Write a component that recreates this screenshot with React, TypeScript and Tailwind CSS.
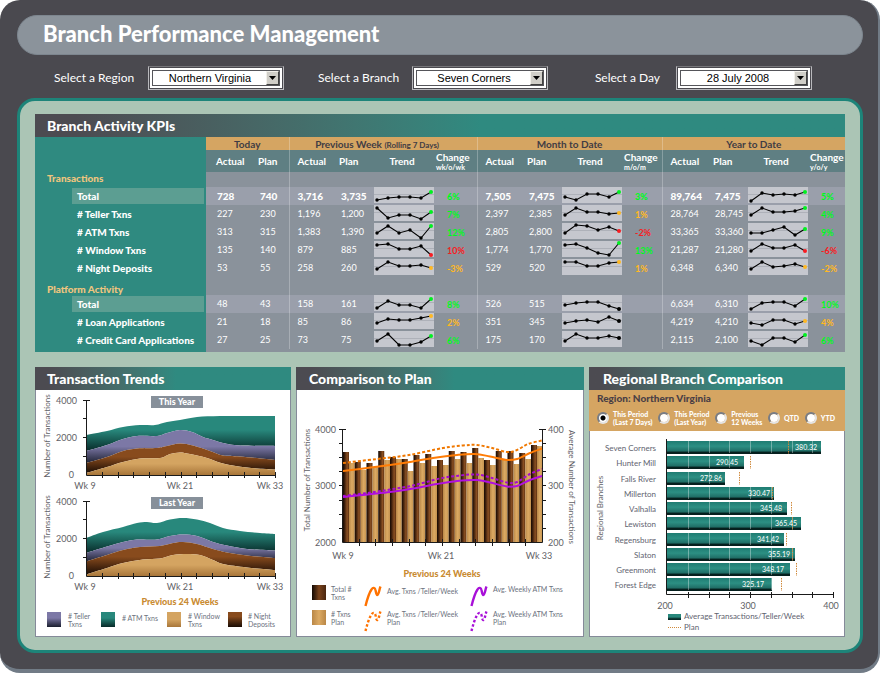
import { useId, useState } from "react";
import type { ReactNode } from "react";

type Point = [number, number];
type Tone = "good" | "warn" | "bad" | "none";

interface Period {
  actual: string;
  plan: string;
  trend?: number[];
  tone?: Tone;
  change?: string;
}

interface KpiRow {
  label: string;
  total?: boolean;
  strong?: boolean;
  periods: Period[];
}

const toneFill: Record<Tone, string> = {
  good: "#00f020",
  warn: "#ffb822",
  bad: "#f81c22",
  none: "#000000",
};

const toneText: Record<Tone, string> = {
  good: "text-[#00fa1e]",
  warn: "text-[#ffb822]",
  bad: "text-[#f81c22]",
  none: "text-white",
};

const transactions: KpiRow[] = [
  {
    label: "Total",
    total: true,
    strong: true,
    periods: [
      { actual: "728", plan: "740" },
      { actual: "3,716", plan: "3,735", trend: [13, 11, 10, 10, 11, 5], tone: "good", change: "6%" },
      { actual: "7,505", plan: "7,475", trend: [10, 13, 7, 7, 10, 5], tone: "good", change: "3%" },
      { actual: "89,764", plan: "7,475", trend: [14, 6, 8, 7, 8, 5], tone: "good", change: "5%" },
    ],
  },
  {
    label: "# Teller Txns",
    periods: [
      { actual: "227", plan: "230" },
      { actual: "1,196", plan: "1,200", trend: [3, 13, 10, 10, 14, 7], tone: "good", change: "7%" },
      { actual: "2,397", plan: "2,385", trend: [10, 3, 7, 7, 9, 8], tone: "warn", change: "1%" },
      { actual: "28,764", plan: "28,745", trend: [10, 3, 7, 7, 6, 3], tone: "good", change: "4%" },
    ],
  },
  {
    label: "# ATM Txns",
    periods: [
      { actual: "313", plan: "315" },
      { actual: "1,383", plan: "1,390", trend: [10, 3, 10, 7, 15, 3], tone: "good", change: "12%" },
      { actual: "2,805", plan: "2,800", trend: [10, 2, 3, 7, 4, 8], tone: "bad", change: "-2%" },
      { actual: "33,365", plan: "33,360", trend: [10, 10, 7, 4, 12, 6], tone: "good", change: "9%" },
    ],
  },
  {
    label: "# Window Txns",
    periods: [
      { actual: "135", plan: "140" },
      { actual: "879", plan: "885", trend: [4, 3, 8, 8, 5, 14], tone: "bad", change: "10%" },
      { actual: "1,774", plan: "1,770", trend: [4, 3, 7, 12, 14, 2], tone: "good", change: "13%" },
      { actual: "21,287", plan: "21,280", trend: [10, 3, 7, 7, 4, 10], tone: "bad", change: "-6%" },
    ],
  },
  {
    label: "# Night Deposits",
    periods: [
      { actual: "53", plan: "55" },
      { actual: "258", plan: "260", trend: [10, 3, 7, 7, 6, 9], tone: "warn", change: "-3%" },
      { actual: "529", plan: "520", trend: [3, 3, 7, 7, 4, 3], tone: "warn", change: "1%" },
      { actual: "6,348", plan: "6,340", trend: [10, 3, 8, 7, 5, 8], tone: "warn", change: "-2%" },
    ],
  },
];

const platform: KpiRow[] = [
  {
    label: "Total",
    total: true,
    periods: [
      { actual: "48", plan: "43" },
      { actual: "158", plan: "161", trend: [13, 6, 10, 10, 13, 4], tone: "good", change: "8%" },
      { actual: "526", plan: "515", trend: [10, 8, 7, 7, 11, 14], tone: "none" },
      { actual: "6,634", plan: "6,310", trend: [14, 8, 7, 7, 11, 4], tone: "good", change: "10%" },
    ],
  },
  {
    label: "# Loan Applications",
    periods: [
      { actual: "21", plan: "18" },
      { actual: "85", plan: "86", trend: [10, 6, 7, 7, 5, 3], tone: "warn", change: "2%" },
      { actual: "351", plan: "345", trend: [10, 8, 7, 9, 4, 8], tone: "none" },
      { actual: "4,219", plan: "4,210", trend: [10, 12, 7, 7, 11, 8], tone: "warn", change: "4%" },
    ],
  },
  {
    label: "# Credit Card Applications",
    periods: [
      { actual: "27", plan: "25" },
      { actual: "73", plan: "75", trend: [10, 3, 14, 14, 11, 5], tone: "good", change: "6%" },
      { actual: "175", plan: "170", trend: [10, 3, 7, 7, 5, 7], tone: "none" },
      { actual: "2,115", plan: "2,100", trend: [10, 14, 7, 7, 11, 4], tone: "good", change: "6%" },
    ],
  },
];

/* Smooth curve through the points (Catmull-Rom turned into cubic segments). */
function curve(points: Point[]): string {
  let d = "";
  for (let i = 0; i < points.length - 1; i++) {
    const p0 = points[Math.max(0, i - 1)];
    const p1 = points[i];
    const p2 = points[i + 1];
    const p3 = points[Math.min(points.length - 1, i + 2)];
    d += ` C${p1[0] + (p2[0] - p0[0]) / 6},${p1[1] + (p2[1] - p0[1]) / 6} ${p2[0] - (p3[0] - p1[0]) / 6},${p2[1] - (p3[1] - p1[1]) / 6} ${p2[0]},${p2[1]}`;
  }
  return d;
}

function line(points: Point[]): string {
  return `M${points[0][0]},${points[0][1]}${curve(points)}`;
}

function band(top: Point[], bottom: Point[]): string {
  const back = [...bottom].reverse();
  return `${line(top)} L${back[0][0]},${back[0][1]}${curve(back)} Z`;
}

/* ---------- Top bar ---------- */

function Picker({ label, options }: { label: string; options: string[] }) {
  const id = useId();
  return (
    <div className="flex items-center gap-4">
      <label htmlFor={id} className="w-[78px] whitespace-nowrap text-right text-[12px] leading-4 text-white">
        {label}
      </label>
      <div className="border border-[#b9b9bd] border-t-[#77777b] p-px">
        <div className="relative border-2 border-white">
          <select
            id={id}
            className="block h-4 w-[128px] appearance-none border border-[#55555a] bg-white pr-3 text-center font-['Liberation_Sans',Arial,sans-serif] text-[11px] leading-[14px] text-black outline-none"
          >
            {options.map((o) => (
              <option key={o}>{o}</option>
            ))}
          </select>
          <span className="pointer-events-none absolute inset-y-px right-px flex w-[13px] items-center justify-center border border-[#f2f0ea] border-r-[#404040] border-b-[#404040] bg-[#d0cec8]">
            <svg width="7" height="4" viewBox="0 0 7 4" aria-hidden="true">
              <path d="M0 0h7L3.5 4z" fill="#000" />
            </svg>
          </span>
        </div>
      </div>
    </div>
  );
}

/* ---------- KPI table ---------- */

function Sparkline({ values, tone }: { values: number[]; tone: Tone }) {
  const xs = [3, 14, 25, 36, 47, 57];
  return (
    <svg viewBox="0 0 60 18" className="block h-[18px] w-full" aria-hidden="true">
      <rect width="60" height="16" fill="#c5c7ce" />
      <path d="M0 7.5h60" stroke="#aeb1b9" />
      <polyline points={values.map((v, i) => `${xs[i]},${v}`).join(" ")} fill="none" stroke="#000" strokeWidth="1.1" />
      {values.map((v, i) => (
        <circle key={i} cx={xs[i]} cy={v} r={i === 5 ? 2 : 1.7} fill={i === 5 ? toneFill[tone] : "#000"} />
      ))}
    </svg>
  );
}

function PeriodCells({ period, first, strong }: { period: Period; first: boolean; strong?: boolean }) {
  const text = strong ? "text-[10px] font-black" : "text-[9px] font-normal";
  return (
    <>
      <td className={`${first ? "pl-[11px]" : "border-l border-white/25 pl-2"} ${text}`}>{period.actual}</td>
      <td className={`pl-[9px] ${text}`}>{period.plan}</td>
      {!first && (
        <>
          <td>{period.trend && <Sparkline values={period.trend} tone={period.tone ?? "none"} />}</td>
          <td className={`pt-0.5 pl-[13px] text-[9px] ${strong ? "font-black" : "font-bold"} ${toneText[period.tone ?? "none"]}`}>
            {period.change}
          </td>
        </>
      )}
    </>
  );
}

function SectionRow({ title, tall }: { title: string; tall?: boolean }) {
  return (
    <tr className={tall ? "h-[18px]" : "h-[15px]"}>
      <th
        scope="rowgroup"
        className={`bg-[#2f8a80] pl-3 text-left text-[10px] leading-3 font-black text-[#efc57e] ${tall ? "align-bottom" : "align-top"}`}
      >
        {title}
      </th>
      <td colSpan={2} />
      <td colSpan={4} className="border-l border-white/25" />
      <td colSpan={4} className="border-l border-white/25" />
      <td colSpan={4} className="border-l border-white/25" />
    </tr>
  );
}

function KpiRows({ rows }: { rows: KpiRow[] }) {
  return (
    <>
      {rows.map((row) => (
        <tr key={row.label} className={`h-[18px] leading-4 ${row.total ? "bg-[#9a9fab]" : ""}`}>
          <th scope="row" className="bg-[#2f8a80] pr-0.5 pl-[37px] text-left text-[10px] font-black whitespace-nowrap">
            <div className={`pl-[5px] ${row.total ? "bg-[#5c9e92]" : ""}`}>{row.label}</div>
          </th>
          {row.periods.map((p, i) => (
            <PeriodCells key={i} period={p} first={i === 0} strong={row.strong} />
          ))}
        </tr>
      ))}
    </>
  );
}

function HeadCells({ unit }: { unit?: string }) {
  return (
    <>
      <th scope="col" className={`text-left ${unit ? "border-l border-white/25 pl-2" : "pl-2.5"}`}>
        Actual
      </th>
      <th scope="col" className="pl-[7px] text-left">
        Plan
      </th>
      {unit && (
        <>
          <th scope="col" className="pr-1 text-center">Trend</th>
          <th scope="col" className="pl-0.5 text-left leading-3">
            <span className="block">Change</span>
            <span className="block text-[7px] leading-[9px]">{unit}</span>
          </th>
        </>
      )}
    </>
  );
}

function KpiTable() {
  return (
    <table className="w-full table-fixed border-collapse bg-[#8a929b] text-white">
      <colgroup>
        <col className="w-[171px]" />
        <col className="w-[45px]" />
        <col className="w-[38px]" />
        <col className="w-[43px]" />
        <col className="w-[42px]" />
        <col className="w-[60px]" />
        <col className="w-[43px]" />
        <col className="w-[43px]" />
        <col className="w-[42px]" />
        <col className="w-[60px]" />
        <col className="w-[40px]" />
        <col className="w-[44px]" />
        <col className="w-[42px]" />
        <col className="w-[60px]" />
        <col className="w-[37px]" />
      </colgroup>
      <thead>
        <tr className="h-[13px] bg-[#d5a562] text-[10px] leading-3 font-black text-[#413c44]">
          <td rowSpan={2} className="bg-[#2f8a80]" />
          <th scope="colgroup" colSpan={2}>Today</th>
          <th scope="colgroup" colSpan={4} className="border-l border-white/25 pr-3">
            Previous Week <span className="text-[8px] leading-none">(Rolling 7 Days)</span>
          </th>
          <th scope="colgroup" colSpan={4} className="border-l border-white/25">Month to Date</th>
          <th scope="colgroup" colSpan={4} className="border-l border-white/25">Year to Date</th>
        </tr>
        <tr className="h-[22px] bg-[#5f7f83] text-[10px] leading-3 font-black">
          <HeadCells />
          <HeadCells unit="wk/o/wk" />
          <HeadCells unit="m/o/m" />
          <HeadCells unit="y/o/y" />
        </tr>
      </thead>
      <tbody>
        <SectionRow title="Transactions" />
        <KpiRows rows={transactions} />
      </tbody>
      <tbody>
        <SectionRow title="Platform Activity" tall />
        <KpiRows rows={platform} />
      </tbody>
    </table>
  );
}

/* ---------- Panels ---------- */

function TitleBar({ children, inset = "pl-3" }: { children: ReactNode; inset?: string }) {
  return (
    <h2
      className={`h-[23px] bg-linear-to-r from-[#4c4b51] from-5% to-[#2f8a80] to-55% text-[14px] leading-[23px] font-black whitespace-nowrap text-white ${inset}`}
    >
      {children}
    </h2>
  );
}

function Panel({ title, inset, children }: { title: string; inset?: string; children: ReactNode }) {
  return (
    <section className="flex flex-col">
      <TitleBar inset={inset}>{title}</TitleBar>
      <div className="flex flex-1 flex-col border border-t-0 border-[#858a99] bg-white">{children}</div>
    </section>
  );
}

function Gradients({ id }: { id: string }) {
  return (
    <defs>
      <linearGradient id={`${id}-atm`} x1="0" y1="0" x2="0" y2="1">
        <stop offset="0.4" stopColor="#28887c" />
        <stop offset="1" stopColor="#082b29" />
      </linearGradient>
      <linearGradient id={`${id}-teller`} x1="0" y1="0" x2="0" y2="1">
        <stop offset="0.5" stopColor="#7c78a6" />
        <stop offset="1" stopColor="#1f2334" />
      </linearGradient>
      <linearGradient id={`${id}-night`} x1="0" y1="0" x2="0" y2="1">
        <stop offset="0.45" stopColor="#884b1d" />
        <stop offset="1" stopColor="#1b0d05" />
      </linearGradient>
      <linearGradient id={`${id}-window`} x1="0" y1="0" x2="0" y2="1">
        <stop offset="0.5" stopColor="#d4a461" />
        <stop offset="1" stopColor="#a8763a" />
      </linearGradient>
    </defs>
  );
}

interface Areas {
  atm: Point[];
  teller: Point[];
  night: Point[];
  window: Point[];
}

const thisYear: Areas = {
  atm: [[50, 45], [71, 41], [87, 37], [104, 35], [119, 35], [131, 32], [144, 30], [161, 27], [184, 26], [217, 26], [239, 26]],
  teller: [[50, 61], [71, 55], [87, 49], [101, 46], [121, 46], [131, 43], [144, 40], [156, 42], [167, 47], [177, 50], [187, 53], [204, 55.5], [239, 56]],
  night: [[50, 73], [71, 67], [87, 61], [101, 58.5], [121, 58], [131, 56], [144, 53.5], [157, 55.5], [174, 61], [187, 65.5], [204, 66.5], [239, 70]],
  window: [[50, 83], [71, 77], [87, 72], [104, 68.5], [124, 68], [134, 64], [144, 62.5], [154, 64], [171, 68], [187, 73.5], [211, 77.5], [239, 79.5]],
};

const lastYear: Areas = {
  atm: [[50, 47], [67, 41], [87, 36], [101, 32], [111, 31], [121, 32], [134, 28.5], [147, 27], [161, 28.5], [174, 32], [187, 37], [204, 40], [224, 42], [239, 43]],
  teller: [[50, 62], [71, 55.5], [87, 51], [101, 48.5], [121, 48.5], [134, 45], [147, 43.5], [161, 45], [177, 51], [191, 54.5], [211, 58], [239, 59.5]],
  night: [[50, 70.5], [71, 64], [87, 59], [104, 56], [124, 55], [137, 52], [147, 51], [161, 53], [177, 58], [191, 61.5], [211, 64.5], [239, 67]],
  window: [[50, 83.5], [71, 77], [87, 72], [107, 68.5], [124, 67.5], [137, 64], [151, 63], [164, 64], [177, 69], [187, 73], [211, 76.5], [239, 79]],
};

function AreaChart({ title, areas }: { title: string; areas: Areas }) {
  const id = useId();
  const base: Point[] = [[50, 85], [239, 85]];
  return (
    <svg viewBox="0 0 254 101" className="block w-full" role="img" aria-label={`Number of transactions, ${title}`}>
      <Gradients id={id} />
      <path d={band(areas.atm, areas.teller)} fill={`url(#${id}-atm)`} />
      <path d={band(areas.teller, areas.night)} fill={`url(#${id}-teller)`} />
      <path d={band(areas.night, areas.window)} fill={`url(#${id}-night)`} />
      <path d={band(areas.window, base)} fill={`url(#${id}-window)`} />
      <g stroke="#1a1a1a" fill="none">
        <path d="M50.5 10.5V85.5H239.5" />
        {[11, 29, 48, 67].map((y) => (
          <path key={y} d={`M47 ${y - 0.5}h${y === 11 ? 7 : 4}`} />
        ))}
        {Array.from({ length: 12 }, (_, i) => (
          <path key={i} d={`M${Math.round(50 + (i + 1) * 15.75) + 0.5} 82v6`} />
        ))}
      </g>
      <rect x="115" y="6" width="52" height="12" fill="#87909a" />
      <g fontSize="9" fill="#5f6166">
        <text x="141" y="15" textAnchor="middle" fontWeight="900" fill="#fff">{title}</text>
        <text x="41" y="14" textAnchor="end">4000</text>
        <text x="41" y="51" textAnchor="end">2000</text>
        <text x="38" y="88" textAnchor="end">0</text>
        <text x="49" y="99" textAnchor="middle">Wk 9</text>
        <text x="144" y="99" textAnchor="middle">Wk 21</text>
        <text x="234" y="99" textAnchor="middle">Wk 33</text>
        <text transform="translate(14 46) rotate(-90)" textAnchor="middle" fontSize="8">Number of Transactions</text>
      </g>
    </svg>
  );
}

function Swatch({ className }: { className: string }) {
  return <span className={`h-[15px] w-[14px] shrink-0 ${className}`} />;
}

function Caption({ children }: { children: ReactNode }) {
  return <p className="text-center text-[9px] leading-3 font-black text-[#c98b31]">{children}</p>;
}

function TransactionTrends() {
  return (
    <Panel title="Transaction Trends">
      <AreaChart title="This Year" areas={thisYear} />
      <AreaChart title="Last Year" areas={lastYear} />
      <div className="pt-1 pl-[34px]">
        <Caption>Previous 24 Weeks</Caption>
      </div>
      <ul className="grid grid-cols-[54fr_66fr_61fr_62fr] pt-1 pb-2 pl-[11px] text-[7px] leading-2 whitespace-nowrap text-[#6c7280]">
        <li className="flex gap-[7px]">
          <Swatch className="bg-linear-to-b from-[#7c78a6] from-40% to-[#1c2030]" />
          <span># Teller<br />Txns</span>
        </li>
        <li className="flex gap-[7px]">
          <Swatch className="bg-linear-to-b from-[#28887c] from-40% to-[#082b29]" />
          <span className="pt-0.5"># ATM Txns</span>
        </li>
        <li className="flex gap-[7px]">
          <Swatch className="bg-linear-to-b from-[#d4a461] from-50% to-[#a8763a]" />
          <span># Window<br />Txns</span>
        </li>
        <li className="flex gap-1.5">
          <Swatch className="bg-linear-to-b from-[#884b1d] from-30% to-[#1b0d05]" />
          <span># Night<br />Deposits</span>
        </li>
      </ul>
    </Panel>
  );
}

const actualTops = [62, 72, 73, 61, 67, 69, 65, 64, 70, 61, 62, 58, 70, 61, 61, 63, 55];
const planTops = [73, 80, 77, 70, 69, 81, 73, 76, 75, 69, 73, 68, 75, 69, 74, 69, 56];

const tellerLine: Point[] = [[46, 81], [70, 78], [93, 75], [113, 72], [136, 68], [160, 65], [178, 64], [193, 66.5], [210, 70], [220, 69], [233, 63], [245, 58.5]];
const tellerPlan: Point[] = [[46, 73], [80, 69], [112, 65], [146, 58], [166, 55.5], [180, 55], [195, 58], [210, 62], [220, 60], [231, 54], [245, 50.5]];
const atmLine: Point[] = [[46, 107], [93, 102], [116, 98.5], [140, 94], [160, 91], [180, 90], [193, 92.5], [210, 96.5], [220, 96], [233, 90], [245, 86]];
const atmPlan: Point[] = [[46, 106], [70, 103], [93, 99.5], [116, 95.5], [143, 88.5], [163, 85.5], [180, 84.5], [195, 88], [210, 92.5], [220, 92], [233, 84], [245, 79]];

function ComparisonChart() {
  const id = useId();
  return (
    <svg viewBox="0 0 286 173" className="block w-full" role="img" aria-label="Comparison of transactions to plan">
      <defs>
        <linearGradient id={`${id}-a`}>
          <stop offset="0" stopColor="#150a04" />
          <stop offset="0.25" stopColor="#3a1d0b" />
          <stop offset="0.7" stopColor="#8a4f22" />
          <stop offset="1" stopColor="#5c3112" />
        </linearGradient>
        <linearGradient id={`${id}-p`}>
          <stop offset="0" stopColor="#b98747" />
          <stop offset="0.5" stopColor="#dcaa63" />
          <stop offset="1" stopColor="#c4924f" />
        </linearGradient>
      </defs>
      {actualTops.map((top, i) => {
        const x = 46 + i * 11.75;
        return (
          <g key={i}>
            <rect x={x} y={top} width="6" height={152 - top} fill={`url(#${id}-a)`} />
            <rect x={x + 6} y={planTops[i]} width="5.75" height={152 - planTops[i]} fill={`url(#${id}-p)`} />
          </g>
        );
      })}
      <g stroke="#1a1a1a" fill="none">
        <path d="M45.5 39.5V152.5H245.5V39.5" />
        {Array.from({ length: 8 }, (_, i) => {
          const y = Math.round(39 + i * 14.1) + 0.5;
          return <path key={i} d={i === 0 ? `M42 ${y}h7M242 ${y}h7` : `M42 ${y}h4M245 ${y}h4`} />;
        })}
        {Array.from({ length: 11 }, (_, i) => (
          <path key={i} d={`M${Math.round(45 + (i + 1) * 16.65) + 0.5} 149v7`} />
        ))}
      </g>
      <g fill="none" strokeWidth="2">
        <path d={line(tellerPlan)} stroke="#f07800" strokeDasharray="3 2" />
        <path d={line(tellerLine)} stroke="#ff7c05" />
        <path d={line(atmPlan)} stroke="#a50cd0" strokeDasharray="3 2" />
        <path d={line(atmLine)} stroke="#b010e0" />
      </g>
      <g fontSize="9" fill="#5f6166">
        <text x="39" y="43" textAnchor="end">4000</text>
        <text x="39" y="99" textAnchor="end">3000</text>
        <text x="39" y="156" textAnchor="end">2000</text>
        <text x="251" y="43">400</text>
        <text x="251" y="99">300</text>
        <text x="251" y="156">200</text>
        <text x="46" y="169" textAnchor="middle">Wk 9</text>
        <text x="144" y="169" textAnchor="middle">Wk 21</text>
        <text x="242" y="169" textAnchor="middle">Wk 33</text>
        <text transform="translate(13 90) rotate(-90)" textAnchor="middle" fontSize="8">Total Number of Transactions</text>
        <text transform="translate(272 97) rotate(90)" textAnchor="middle" fontSize="8">Average Number of Transactions</text>
      </g>
    </svg>
  );
}

function Squiggle({ color, dashed }: { color: string; dashed?: boolean }) {
  return (
    <svg width="18" height="22" viewBox="0 0 18 22" className="shrink-0" aria-hidden="true">
      <path
        d="M1.500 21C3 15 5 8 7.500 4.500 9 2 11 2.500 11.500 5c.5 2 .5 4 1.500 5 2 0 2-5 3.500-8.500"
        fill="none"
        stroke={color}
        strokeWidth="2.400"
        strokeLinejoin="round"
        strokeDasharray={dashed ? "2.500 2" : undefined}
      />
    </svg>
  );
}

function ComparisonToPlan() {
  return (
    <Panel title="Comparison to Plan" inset="pl-[13px]">
      <ComparisonChart />
      <div className="pt-[5px] pl-1">
        <Caption>Previous 24 Weeks</Caption>
      </div>
      <ul className="grid grid-cols-[52fr_106fr_113fr] gap-y-[3px] pt-[5px] pl-[15px] text-[7px] leading-2 whitespace-nowrap text-[#6c7280]">
        <li className="flex gap-[5px]">
          <Swatch className="bg-linear-to-r from-[#150a04] via-[#7a431b] to-[#4a2710]" />
          <span>Total #<br />Txns</span>
        </li>
        <li className="flex gap-[5px]">
          <Squiggle color="#ff7200" />
          <span className="pt-0.5">Avg. Txns /Teller/Week</span>
        </li>
        <li className="flex gap-[5px]">
          <Squiggle color="#a810d8" />
          <span>Avg. Weekly ATM Txns</span>
        </li>
        <li className="flex gap-[5px]">
          <Swatch className="bg-linear-to-r from-[#b98747] via-[#dcaa63] to-[#b98747]" />
          <span># Txns<br />Plan</span>
        </li>
        <li className="flex gap-[5px]">
          <Squiggle color="#ff7200" dashed />
          <span>Avg. Txns /Teller/Week<br />Plan</span>
        </li>
        <li className="flex gap-[5px]">
          <Squiggle color="#a810d8" dashed />
          <span>Avg. Weekly ATM Txns<br />Plan</span>
        </li>
      </ul>
    </Panel>
  );
}

const branches = [
  { name: "Seven Corners", value: "380.32", end: 231, label: 227, plan: 198 },
  { name: "Hunter Mill", value: "290.45", end: 154, label: 148, plan: 160 },
  { name: "Falls River", value: "272.86", end: 135, label: 132, plan: 149 },
  { name: "Millerton", value: "330.47", end: 184, label: 180, plan: 182 },
  { name: "Valhalla", value: "345.48", end: 197, label: 192, plan: 201 },
  { name: "Lewiston", value: "365.45", end: 211, label: 207, plan: 202 },
  { name: "Regensburg", value: "341.42", end: 194, label: 189, plan: 196 },
  { name: "Slaton", value: "355.19", end: 205, label: 200, plan: 202 },
  { name: "Greenmont", value: "348.17", end: 200, label: 194, plan: 206 },
  { name: "Forest Edge", value: "325.17", end: 182, label: 174, plan: 191 },
];

function BranchChart() {
  const id = useId();
  const ticks = Array.from({ length: 8 }, (_, i) => Math.round(77 + (i + 1) * 20.75));
  return (
    <svg viewBox="0 0 254 180" className="block w-full" role="img" aria-label="Average transactions per teller per week by branch">
      <defs>
        <linearGradient id={`${id}-bar`} x1="0" y1="0" x2="0" y2="1">
          <stop offset="0" stopColor="#1f7c72" />
          <stop offset="0.4" stopColor="#2c8f83" />
          <stop offset="0.75" stopColor="#206f67" />
          <stop offset="0.88" stopColor="#06201e" />
          <stop offset="1" stopColor="#06201e" />
        </linearGradient>
      </defs>
      {branches.map((b, i) => {
        const y = Math.round(10 + i * 15.25);
        return (
          <g key={b.name}>
            <rect x="77" y={y} width={b.end - 77} height="13" fill={`url(#${id}-bar)`} />
            {ticks.filter((t) => t < b.end).map((t) => (
              <path key={t} d={`M${t + 0.5} ${y}v12`} stroke="#fff" strokeOpacity="0.35" />
            ))}
            <path d={`M${b.plan + 0.5} ${y}v13`} stroke="#d08a3c" strokeDasharray="1.500 1" />
            <text x="66" y={y + 10} textAnchor="end" fontSize="8" fill="#5f6470">{b.name}</text>
            <text x={b.label} y={y + 9} textAnchor="end" fontSize="7" fill="#fff">{b.value}</text>
          </g>
        );
      })}
      <g stroke="#1a1a1a" fill="none">
        <path d="M76.500 8V163.500H243.500" />
        {ticks.map((t) => (
          <path key={t} d={`M${t + 0.5} 161v6`} />
        ))}
      </g>
      <g fontSize="9" fill="#5f6166">
        <text x="75" y="178" textAnchor="middle">200</text>
        <text x="158" y="178" textAnchor="middle">300</text>
        <text x="241" y="178" textAnchor="middle">400</text>
        <text transform="translate(13 77) rotate(-90)" textAnchor="middle" fontSize="8">Regional Branches</text>
      </g>
    </svg>
  );
}

const spans = [
  { id: "period", lines: ["This Period", "(Last 7 Days)"] },
  { id: "period-ly", lines: ["This Period", "(Last Year)"] },
  { id: "weeks", lines: ["Previous", "12 Weeks"] },
  { id: "qtd", lines: ["QTD"] },
  { id: "ytd", lines: ["YTD"] },
];

function RegionalComparison() {
  const [span, setSpan] = useState("period");
  return (
    <Panel title="Regional Branch Comparison" inset="pl-[14px]">
      <div className="-mx-px h-[41px] bg-[#d5a562] pr-2.5 pl-2">
        <h3 className="pt-0.5 text-[10px] leading-3 font-black text-[#4a3f45]">Region: Northern Virginia</h3>
        <fieldset className="flex items-center justify-between pt-1.5">
          {spans.map((s) => (
            <label key={s.id} className="flex items-center gap-1 text-[7px] leading-2 font-black whitespace-nowrap text-white">
              <input
                type="radio"
                name="span"
                checked={span === s.id}
                onChange={() => setSpan(s.id)}
                className="size-3 shrink-0 appearance-none rounded-full border-2 border-[#e4e4e4] border-t-[#777c86] border-l-[#777c86] bg-white bg-clip-padding checked:bg-[radial-gradient(circle,#000_2px,#fff_3px)]"
              />
              <span>
                {s.lines.map((l) => (
                  <span key={l} className="block">{l}</span>
                ))}
              </span>
            </label>
          ))}
        </fieldset>
      </div>
      <BranchChart />
      <ul className="pb-[3px] pl-[78px] text-[8px] leading-[11px] text-[#5f6470]">
        <li className="flex items-center gap-[3px]">
          <span className="h-1.5 w-[13px] bg-linear-to-b from-[#28887c] from-50% to-[#082b29] to-80%" />
          Average Transactions/Teller/Week
        </li>
        <li className="flex items-center gap-[3px]">
          <span className="w-[13px] border-t border-dotted border-[#d08a3c]" />
          Plan
        </li>
      </ul>
    </Panel>
  );
}

export default function App() {
  return (
    <div className="bg-white font-['Lato',sans-serif]">
      <main className="rounded-[20px] border-r-2 border-b-4 border-[#717b86] bg-[#4a494f] pt-[15px] pr-[15px] pb-4 pl-[17px]">
        <header>
          <h1 className="h-10 rounded-full border border-[#7d868f] bg-[#8b939b] pl-[25px] text-[22px] leading-[36px] font-black text-white">
            Branch Performance Management
          </h1>
          <form className="grid grid-cols-3 pt-[11px] pr-[17px] pb-2 pl-[37px]">
            <Picker label="Select a Region" options={["Northern Virginia"]} />
            <Picker label="Select a Branch" options={["Seven Corners", "Hunter Mill", "Falls River"]} />
            <Picker label="Select a Day" options={["28 July 2008"]} />
          </form>
        </header>
        <div className="flex flex-col gap-[15px] rounded-[18px] border-[3px] border-[#1d8479] bg-[#abc5b5] px-[15px] py-[13px]">
          <section>
            <TitleBar>Branch Activity KPIs</TitleBar>
            <KpiTable />
            <div className="flex h-[3px] bg-[#8a929b]">
              <div className="w-[21.1%] bg-[#2f8a80]" />
            </div>
          </section>
          <div className="grid grid-cols-[256fr_288fr_256fr] gap-[5px]">
            <TransactionTrends />
            <ComparisonToPlan />
            <RegionalComparison />
          </div>
        </div>
      </main>
    </div>
  );
}
